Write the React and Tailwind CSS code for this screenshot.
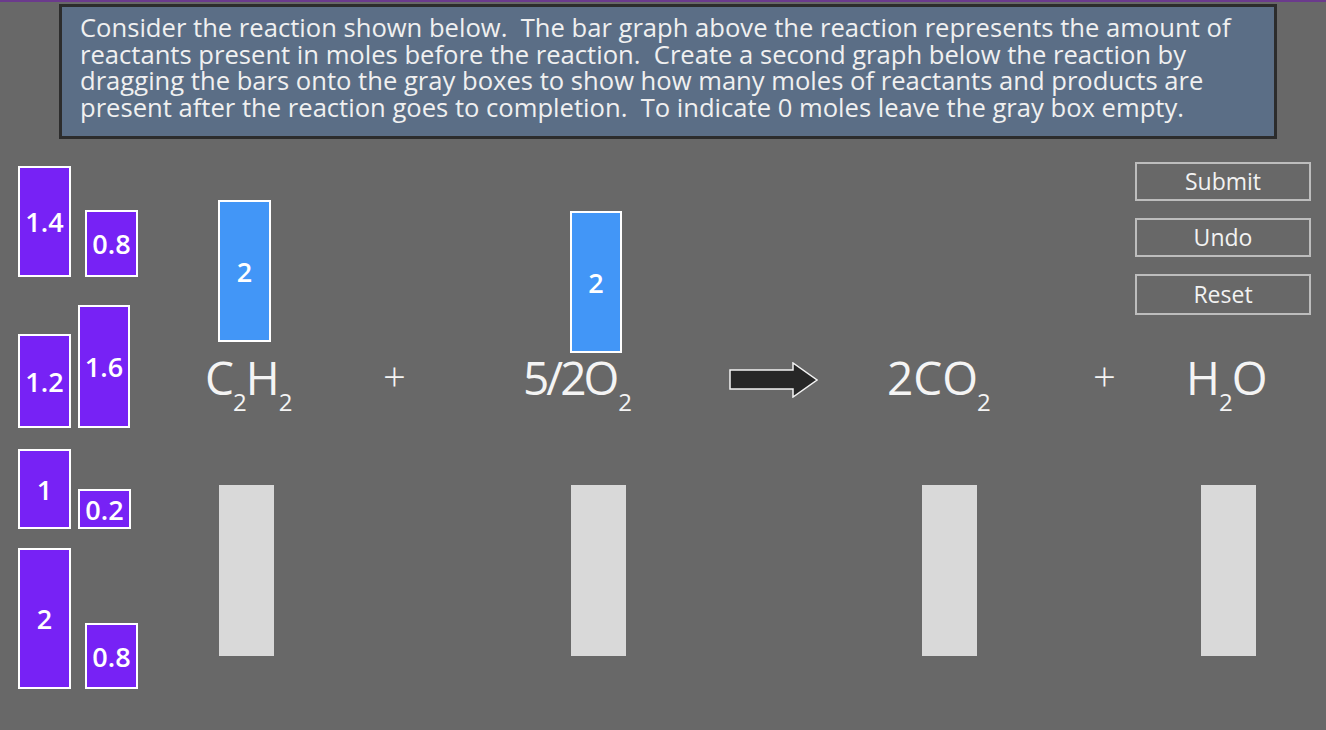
import React from 'react';

// Stoichiometry drag-the-bars activity board.

const body = { fontFamily: '"Open Sans", "Noto Sans", sans-serif' };

function Bar({ label, w, h, color = 'bg-[#7722f5]' }) {
  return (
    <div
      className={`${color} border-2 border-white flex items-center justify-center text-[27px] font-semibold text-white leading-none`}
      style={{ width: w, height: h }}
    >
      {label}
    </div>
  );
}

function Sub({ children }) {
  return <span className="relative top-[16px] text-[24px] ml-[-1px] mr-[-1px]">{children}</span>;
}

function Button({ label, h = 'h-[39px]' }) {
  return (
    <button className={`w-[176px] ${h} border-2 border-[#bdbdbd] text-[23px] text-[#f2f2f2] leading-none flex items-center justify-center`}>
      {label}
    </button>
  );
}

function Arrow() {
  return (
    <svg width="89" height="36" viewBox="0 0 89 36" className="mt-[15px]">
      <path d="M1 8 H64 V1 L88 18 L64 35 V27 H1 Z" fill="#262626" stroke="#f2f2f2" strokeWidth="1.5" strokeLinejoin="miter" />
    </svg>
  );
}

function Slot({ ml }) {
  return <div className={`${ml} w-[55px] h-[171px] bg-[#d9d9d9]`} />;
}

export default function App() {
  return (
    <div className="w-[1326px] h-[730px] bg-[#686868] overflow-hidden" style={body}>
      <div className="h-[2px] bg-[#6b3a8c]" />

      <div className="mt-[2px] ml-[59px] w-[1218px] h-[135px] border-[3px] border-[#2c2c2c] bg-[#5b6e86] pl-[18px] pt-[8px] text-[#f0f0f0] text-[25.6px] leading-[26.5px] whitespace-nowrap">
        Consider the reaction shown below.&nbsp; The bar graph above the reaction represents the amount of<br />
        reactants present in moles before the reaction.&nbsp; Create a second graph below the reaction by<br />
        dragging the bars onto the gray boxes to show how many moles of reactants and products are<br />
        present after the reaction goes to completion.&nbsp; To indicate 0 moles leave the gray box empty.
      </div>

      <div className="flex">
        {/* palette of draggable bars */}
        <div className="w-[160px] pl-[18px] pt-[27px] flex flex-col">
          <div className="flex items-end gap-[14px]">
            <Bar label="1.4" w={53} h={111} />
            <Bar label="0.8" w={53} h={67} />
          </div>
          <div className="mt-[28px] flex items-end gap-[7px]">
            <Bar label="1.2" w={53} h={94} />
            <Bar label="1.6" w={52} h={123} />
          </div>
          <div className="mt-[21px] flex items-end gap-[7px]">
            <Bar label="1" w={53} h={80} />
            <Bar label="0.2" w={53} h={40} />
          </div>
          <div className="mt-[19px] flex items-end gap-[14px]">
            <Bar label="2" w={53} h={141} />
            <Bar label="0.8" w={53} h={66} />
          </div>
        </div>

        {/* reaction area */}
        <div className="flex-1 pt-[23px] flex flex-col">
          <div className="h-[185px] flex items-start">
            <div className="ml-[58px] mt-[38px]">
              <Bar label="2" w={53} h={142} color="bg-[#4296f7]" />
            </div>
            <div className="ml-[299px] mt-[49px]">
              <Bar label="2" w={52} h={142} color="bg-[#4296f7]" />
            </div>
            <div className="ml-auto mr-[15px] flex flex-col gap-[17px]">
              <Button label="Submit" />
              <Button label="Undo" />
              <Button label="Reset" h="h-[41px]" />
            </div>
          </div>

          <div className="h-[74px] flex items-start text-[46px] leading-[60px] font-normal text-[#f4f4f4] whitespace-nowrap">
            <div className="ml-[45px] w-[178px]">C<Sub>2</Sub>H<Sub>2</Sub></div>
            <div className="w-[140px] text-[40px] leading-[58px] font-light">+</div>
            <div className="w-[206px]"><span className="tracking-[-3px]">5/2</span>O<Sub>2</Sub></div>
            <div className="w-[158px]"><Arrow /></div>
            <div className="w-[206px]">2CO<Sub>2</Sub></div>
            <div className="w-[93px] text-[40px] leading-[58px] font-light">+</div>
            <div>H<Sub>2</Sub>O</div>
          </div>

          <div className="mt-[64px] flex">
            <Slot ml="ml-[59px]" />
            <Slot ml="ml-[297px]" />
            <Slot ml="ml-[296px]" />
            <Slot ml="ml-[224px]" />
          </div>
        </div>
      </div>
    </div>
  );
}
